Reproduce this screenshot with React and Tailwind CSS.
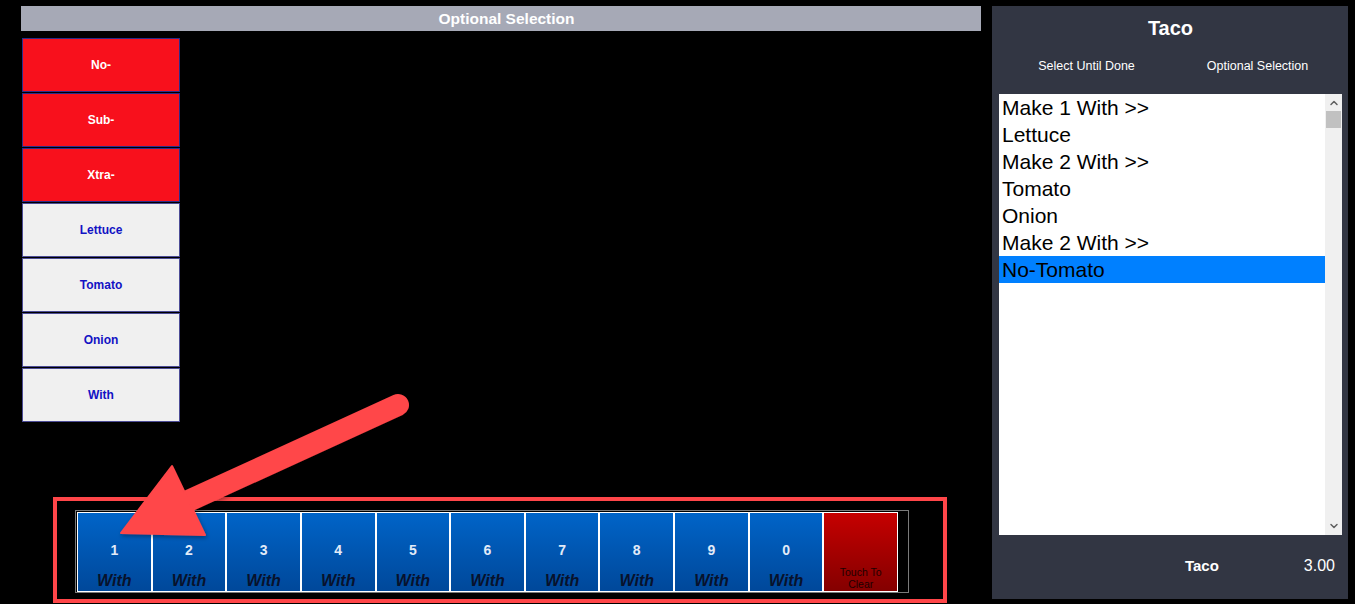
import { ChevronUp, ChevronDown } from 'lucide-react';

const modifiers = [
  { label: 'No-', red: true },
  { label: 'Sub-', red: true },
  { label: 'Xtra-', red: true },
  { label: 'Lettuce' },
  { label: 'Tomato' },
  { label: 'Onion' },
  { label: 'With' },
];

const counts = ['1', '2', '3', '4', '5', '6', '7', '8', '9', '0'];

const lines = ['Make 1 With >>', 'Lettuce', 'Make 2 With >>', 'Tomato', 'Onion', 'Make 2 With >>', 'No-Tomato'];

function ModifierButton({ label, red }) {
  return (
    <button
      className={
        'w-[158px] h-[54px] border flex items-center justify-center text-[12px] font-bold ' +
        (red ? 'bg-[#f8101c] text-white border-[#2c2c8a]' : 'bg-[#f0f0f0] text-[#1212c4] border-[#4c4c96]')
      }
    >
      {label}
    </button>
  );
}

function CountButton({ n }) {
  return (
    <button className="h-[80px] border border-white bg-gradient-to-b from-[#0064c8] to-[#00489a] flex flex-col items-center pt-[29px]">
      <span className="text-[14px] leading-[16px] font-bold text-[#e2ebf8]">{n}</span>
      <span className="mt-[14px] text-[16px] leading-[18px] font-bold italic text-[#08122c]">With</span>
    </button>
  );
}

function Arrow() {
  return (
    <svg className="absolute inset-0 pointer-events-none" width="1355" height="604" viewBox="0 0 1355 604">
      <defs>
        <filter id="shadow" x="-20%" y="-20%" width="140%" height="140%">
          <feDropShadow dx="1" dy="2" stdDeviation="2" floodColor="#000" floodOpacity="0.35" />
        </filter>
      </defs>
      <g fill="#ff4649" stroke="#ff4649" filter="url(#shadow)">
        <line x1="398" y1="405" x2="186" y2="502" strokeWidth="22" strokeLinecap="round" />
        <polygon points="121,533 172,466 205,535" strokeWidth="2" strokeLinejoin="round" />
      </g>
    </svg>
  );
}

export default function App() {
  return (
    <div className="relative w-[1355px] h-[604px] bg-black flex gap-[11px] pl-[21px] overflow-hidden" style={{ fontFamily: '"Liberation Sans", Arial, sans-serif' }}>
      <div className="w-[960px] flex flex-col pt-[6px] pb-px">
        <div className="h-[25px] bg-[#a6a9b6] flex items-center justify-center pl-[11px] text-white font-bold text-[15.5px]">
          Optional Selection
        </div>
        <div className="mt-[7px] ml-px flex flex-col gap-px">
          {modifiers.map((m) => (
            <ModifierButton key={m.label} {...m} />
          ))}
        </div>
        <div className="mt-auto ml-[32px] w-[894px] h-[106px] border-4 border-[#ff4649] pl-[18px] pt-[9px]">
          <div className="w-[834px] h-[83px] border border-[#7a7a7a] p-px">
            <div className="w-[821px] grid grid-cols-11">
              {counts.map((n) => (
                <CountButton key={n} n={n} />
              ))}
              <button className="h-[80px] border border-white bg-gradient-to-b from-[#c60000] to-[#840000] flex flex-col items-center justify-end pb-px">
                <span className="text-[10.5px] leading-[12px] text-[#1c0000] text-center">
                  Touch To
                  <br />
                  Clear
                </span>
              </button>
            </div>
          </div>
        </div>
      </div>

      <div className="mt-[6px] w-[356px] h-[593px] bg-[#323643] flex flex-col px-[7px] pr-[6px]">
        <div className="pt-[10px] text-center text-white font-bold text-[20px] leading-[24px]">Taco</div>
        <div className="mt-[19px] flex text-white text-[12.5px] leading-[14px] -ml-[7px]">
          <div className="w-[178px] pl-[14px] text-center">Select Until Done</div>
          <div className="w-[178px] pl-[6px] text-center">Optional Selection</div>
        </div>
        <div className="mt-[21px] h-[441px] bg-white flex">
          <div className="flex-1 flex flex-col">
            {lines.map((line, i) => (
              <div
                key={i}
                className={'h-[27px] pl-[3px] text-[21px] leading-[27px] text-black ' + (i === lines.length - 1 ? 'bg-[#0080ff]' : '')}
              >
                {line}
              </div>
            ))}
          </div>
          <div className="w-[17px] bg-[#f0f0f0] flex flex-col items-center">
            <ChevronUp className="mt-[3px] w-[12px] h-[12px] text-[#606060]" strokeWidth={3} />
            <div className="mt-[2px] w-[15px] h-[17px] bg-[#c1c1c1]" />
            <div className="flex-1" />
            <ChevronDown className="mb-[3px] w-[12px] h-[12px] text-[#606060]" strokeWidth={3} />
          </div>
        </div>
        <div className="flex-1 flex items-center justify-end gap-[85px] pr-[7px] pb-[2px] text-white">
          <span className="font-bold text-[15px]">Taco</span>
          <span className="text-[16px]">3.00</span>
        </div>
      </div>

      <Arrow />
    </div>
  );
}
